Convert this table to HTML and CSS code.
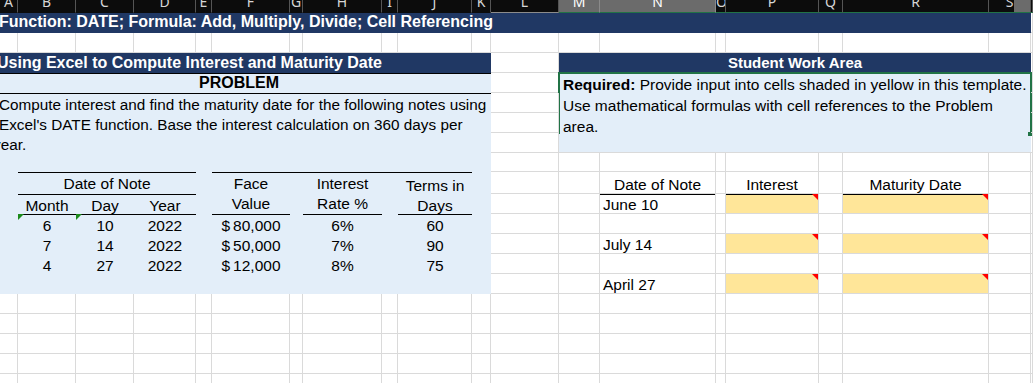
FILE: index.html
```html
<!DOCTYPE html>
<html>
<head>
<meta charset="utf-8">
<title>DATE function worksheet</title>
<link rel="stylesheet" href="styles.css">
</head>
<body>
<div class="sheet">
  <!-- column headers -->
  <div class="hd">A</div><div class="hd">B</div><div class="hd">C</div><div class="hd">D</div><div class="hd">E</div><div class="hd">F</div><div class="hd">G</div><div class="hd">H</div><div class="hd">I</div><div class="hd">J</div><div class="hd">K</div><div class="hd hl">L</div><div class="hd sel">M</div><div class="hd sel">N</div><div class="hd gs">O</div><div class="hd gs">P</div><div class="hd gs">Q</div><div class="hd gs">R</div><div class="hd gs hs">S</div><div class="hd gs"></div>

  <!-- row 1 -->
  <div class="nv title s19">Function: DATE; Formula: Add, Multiply, Divide; Cell Referencing</div><div class="c"></div>

  <!-- row 2 -->
  <div class="c"></div><div class="c"></div><div class="c"></div><div class="c"></div><div class="c"></div><div class="c"></div><div class="c"></div><div class="c"></div><div class="c"></div><div class="c"></div><div class="c"></div><div class="c"></div><div class="c"></div><div class="c"></div><div class="c"></div><div class="c"></div><div class="c"></div><div class="c"></div><div class="c"></div><div class="c"></div>

  <!-- row 3 -->
  <div class="nv sub s11">Using Excel to Compute Interest and Maturity Date</div><div class="c"></div><div class="nv swa s7">Student Work Area</div><div class="c"></div>

  <!-- row 4 -->
  <div class="bl prob s11">PROBLEM</div><div class="c"></div>
  <div class="bl req s7 r4">
    <div class="ln"><b>Required:</b> Provide input into cells shaded in yellow in this template.</div>
    <div class="ln">Use mathematical formulas with cell references to the Problem</div>
    <div class="ln">area.</div>
    <span class="selbox"><span class="handle"></span></span>
  </div>
  <div class="c"></div>

  <!-- row 5 -->
  <div class="bl desc s11 r4">
    <div class="ln l1">Compute interest and find the maturity date for the following notes using</div>
    <div class="ln l2">Excel's DATE function. Base the interest calculation on 360 days per</div>
    <div class="ln l3">year.</div>
  </div>
  <div class="c"></div><div class="c"></div>
  <!-- row 6 -->
  <div class="c"></div><div class="c"></div>
  <!-- row 7 -->
  <div class="c"></div><div class="c"></div>
  <!-- row 8 -->
  <div class="c"></div><div class="c"></div><div class="c"></div><div class="c"></div><div class="c"></div><div class="c"></div><div class="c"></div><div class="c"></div><div class="c"></div>

  <!-- row 9 -->
  <div class="bl"></div>
  <div class="bl s3 tl h9">Date of Note</div>
  <div class="bl"></div>
  <div class="bl r2 tl two">Face<br>Value</div>
  <div class="bl tl"></div>
  <div class="bl r2 tl two">Interest<br>Rate %</div>
  <div class="bl tl"></div>
  <div class="bl r2 tl terms">Terms in<br>Days</div>
  <div class="bl"></div>
  <div class="c"></div><div class="c"></div>
  <div class="c hr">Date of Note</div>
  <div class="c"></div>
  <div class="c hr">Interest</div>
  <div class="c"></div>
  <div class="c hr">Maturity Date</div>
  <div class="c"></div><div class="c"></div>

  <!-- row 10 -->
  <div class="bl"></div>
  <div class="bl tl m10">Month</div>
  <div class="bl tl m10">Day</div>
  <div class="bl tl m10">Year</div>
  <div class="bl"></div>
  <div class="bl"></div>
  <div class="bl"></div>
  <div class="bl"></div>
  <div class="c"></div><div class="c"></div>
  <div class="c dt tl">June 10</div>
  <div class="c"></div>
  <div class="c y tl"></div>
  <div class="c"></div>
  <div class="c y tl"></div>
  <div class="c"></div><div class="c"></div>

  <!-- row 11 -->
  <div class="bl"></div>
  <div class="bl d tl gt">6</div>
  <div class="bl d tl gt">10</div>
  <div class="bl d tl">2022</div>
  <div class="bl"></div>
  <div class="bl d tl"><span class="cur">$</span>80,000</div>
  <div class="bl"></div>
  <div class="bl d tl">6%</div>
  <div class="bl"></div>
  <div class="bl d tl">60</div>
  <div class="bl"></div>
  <div class="c"></div><div class="c"></div><div class="c"></div><div class="c"></div><div class="c"></div><div class="c"></div><div class="c"></div><div class="c"></div><div class="c"></div>

  <!-- row 12 -->
  <div class="bl"></div>
  <div class="bl d">7</div>
  <div class="bl d">14</div>
  <div class="bl d">2022</div>
  <div class="bl"></div>
  <div class="bl d"><span class="cur">$</span>50,000</div>
  <div class="bl"></div>
  <div class="bl d">7%</div>
  <div class="bl"></div>
  <div class="bl d">90</div>
  <div class="bl"></div>
  <div class="c"></div><div class="c"></div>
  <div class="c dt">July 14</div>
  <div class="c"></div>
  <div class="c y"></div>
  <div class="c"></div>
  <div class="c y"></div>
  <div class="c"></div><div class="c"></div>

  <!-- row 13 -->
  <div class="bl"></div>
  <div class="bl d">4</div>
  <div class="bl d">27</div>
  <div class="bl d">2022</div>
  <div class="bl"></div>
  <div class="bl d"><span class="cur">$</span>12,000</div>
  <div class="bl"></div>
  <div class="bl d">8%</div>
  <div class="bl"></div>
  <div class="bl d">75</div>
  <div class="bl"></div>
  <div class="c"></div><div class="c"></div><div class="c"></div><div class="c"></div><div class="c"></div><div class="c"></div><div class="c"></div><div class="c"></div><div class="c"></div>

  <!-- row 14 -->
  <div class="bl s11"></div>
  <div class="c"></div><div class="c"></div>
  <div class="c dt">April 27</div>
  <div class="c"></div>
  <div class="c y"></div>
  <div class="c"></div>
  <div class="c y"></div>
  <div class="c"></div><div class="c"></div>

  <!-- rows 15-19 -->
  <div class="c"></div><div class="c"></div><div class="c"></div><div class="c"></div><div class="c"></div><div class="c"></div><div class="c"></div><div class="c"></div><div class="c"></div><div class="c"></div><div class="c"></div><div class="c"></div><div class="c"></div><div class="c"></div><div class="c"></div><div class="c"></div><div class="c"></div><div class="c"></div><div class="c"></div><div class="c"></div>
  <div class="c"></div><div class="c"></div><div class="c"></div><div class="c"></div><div class="c"></div><div class="c"></div><div class="c"></div><div class="c"></div><div class="c"></div><div class="c"></div><div class="c"></div><div class="c"></div><div class="c"></div><div class="c"></div><div class="c"></div><div class="c"></div><div class="c"></div><div class="c"></div><div class="c"></div><div class="c"></div>
  <div class="c"></div><div class="c"></div><div class="c"></div><div class="c"></div><div class="c"></div><div class="c"></div><div class="c"></div><div class="c"></div><div class="c"></div><div class="c"></div><div class="c"></div><div class="c"></div><div class="c"></div><div class="c"></div><div class="c"></div><div class="c"></div><div class="c"></div><div class="c"></div><div class="c"></div><div class="c"></div>
  <div class="c"></div><div class="c"></div><div class="c"></div><div class="c"></div><div class="c"></div><div class="c"></div><div class="c"></div><div class="c"></div><div class="c"></div><div class="c"></div><div class="c"></div><div class="c"></div><div class="c"></div><div class="c"></div><div class="c"></div><div class="c"></div><div class="c"></div><div class="c"></div><div class="c"></div><div class="c"></div>
  <div class="c"></div><div class="c"></div><div class="c"></div><div class="c"></div><div class="c"></div><div class="c"></div><div class="c"></div><div class="c"></div><div class="c"></div><div class="c"></div><div class="c"></div><div class="c"></div><div class="c"></div><div class="c"></div><div class="c"></div><div class="c"></div><div class="c"></div><div class="c"></div><div class="c"></div><div class="c"></div>
</div>
</body>
</html>
```

FILE: styles.css
```css
html, body {
  margin: 0;
  padding: 0;
  background: #ffffff;
  overflow: hidden;
}

body {
  font-family: "Liberation Sans", Arial, sans-serif;
  font-size: 15.5px;
  color: #000000;
}

.sheet {
  display: grid;
  width: 1033px;
  grid-template-columns: 18px 58px 58px 62px 16px 78px 13px 79px 16px 74px 19px 68px 41px 116px 10px 93px 24px 146px 42px 2px;
  grid-template-rows: 13px repeat(7, 20px) 19px 22px repeat(10, 20px);
}

.sheet > div {
  box-sizing: border-box;
  min-width: 0;
  white-space: nowrap;
  position: relative;
}

/* spans */
.s3 { grid-column: span 3; }
.s7 { grid-column: span 7; }
.s11 { grid-column: span 11; }
.s19 { grid-column: span 19; }
.r2 { grid-row: span 2; }
.r4 { grid-row: span 4; }

/* column header strip */
.hd {
  background: #0c0c0c;
  border-right: 1px solid #555555;
  border-bottom: 1px solid #0c0c0c;
  color: #d6d6d6;
  font-family: "Noto Sans", "Liberation Sans", sans-serif;
  font-size: 14px;
  line-height: 4px;
  text-align: center;
  overflow: hidden;
}
.hd.hl { border-bottom-color: #8c8c8c; }
.hd.sel {
  background: #6b6b6b;
  color: #ffffff;
  border-right-color: #8a8a8a;
  border-bottom: 1px solid #217346;
}
.hd.gs { border-bottom: 1px solid #217346; }
.hd.hs::after {
  content: "";
  position: absolute;
  right: 0;
  top: 0;
  width: 16px;
  height: 12px;
  background: #6b6b6b;
}

/* default worksheet cell with gridlines */
.c {
  border-right: 1px solid #dadada;
  border-bottom: 1px solid #dadada;
}

/* navy banners */
.nv {
  background: #203864;
  color: #ffffff;
  font-weight: bold;
  font-size: 16px;
  line-height: 20px;
  overflow: hidden;
}
.title { line-height: 18px; text-indent: -1px; }
.sub { text-indent: -3px; }
.swa { text-align: center; font-size: 15px; }

/* light blue problem / work area */
.bl { background: #e3eef9; }

.prob {
  text-align: center;
  font-weight: bold;
  font-size: 16px;
  line-height: 20px;
  padding-right: 13px;
  box-shadow: inset 0 1px #000000;
}

.desc {
  padding-top: 2px;
  font-size: 15.3px;
  line-height: 20px;
  box-shadow: inset 0 1px #000000;
  overflow: hidden;
}
.desc .l1 { margin-left: -1px; }
.desc .l2 { margin-left: -1px; }
.desc .l3 { margin-left: -7px; }

.req {
  padding: 1px 0 0 4px;
  line-height: 21px;
  border-bottom: 1px solid #dadada;
}
.selbox {
  position: absolute;
  left: -1px;
  top: -1px;
  right: -1px;
  height: 62px;
  border: 2px solid #217346;
  border-bottom: none;
  box-sizing: border-box;
}
.handle {
  position: absolute;
  right: -2px;
  bottom: -2px;
  width: 4px;
  height: 4px;
  background: #217346;
}

/* black rules in the problem table */
.tl { box-shadow: inset 0 1px #000000; }

.h9 { text-align: center; line-height: 20px; padding-top: 2px; }
.two { text-align: center; line-height: 20px; padding-top: 2px; }
.terms { text-align: center; line-height: 20px; padding-top: 4px; }
.m10 { text-align: center; line-height: 20px; padding-top: 2px; }
.d { text-align: center; line-height: 20px; padding-top: 2px; }
.cur { margin-right: 3px; }

/* green "number stored as text" markers */
.gt::before {
  content: "";
  position: absolute;
  left: 0;
  top: 0;
  border-top: 6px solid #1c8a1c;
  border-right: 6px solid transparent;
}

/* student work area */
.hr {
  text-align: center;
  line-height: 20px;
  padding-top: 3px;
}
.dt {
  line-height: 20px;
  padding: 1px 0 0 3px;
}
.y { background: #ffe699; }
.y::after {
  content: "";
  position: absolute;
  right: 0;
  top: 0;
  border-top: 6px solid #ff0000;
  border-left: 6px solid transparent;
}
```
